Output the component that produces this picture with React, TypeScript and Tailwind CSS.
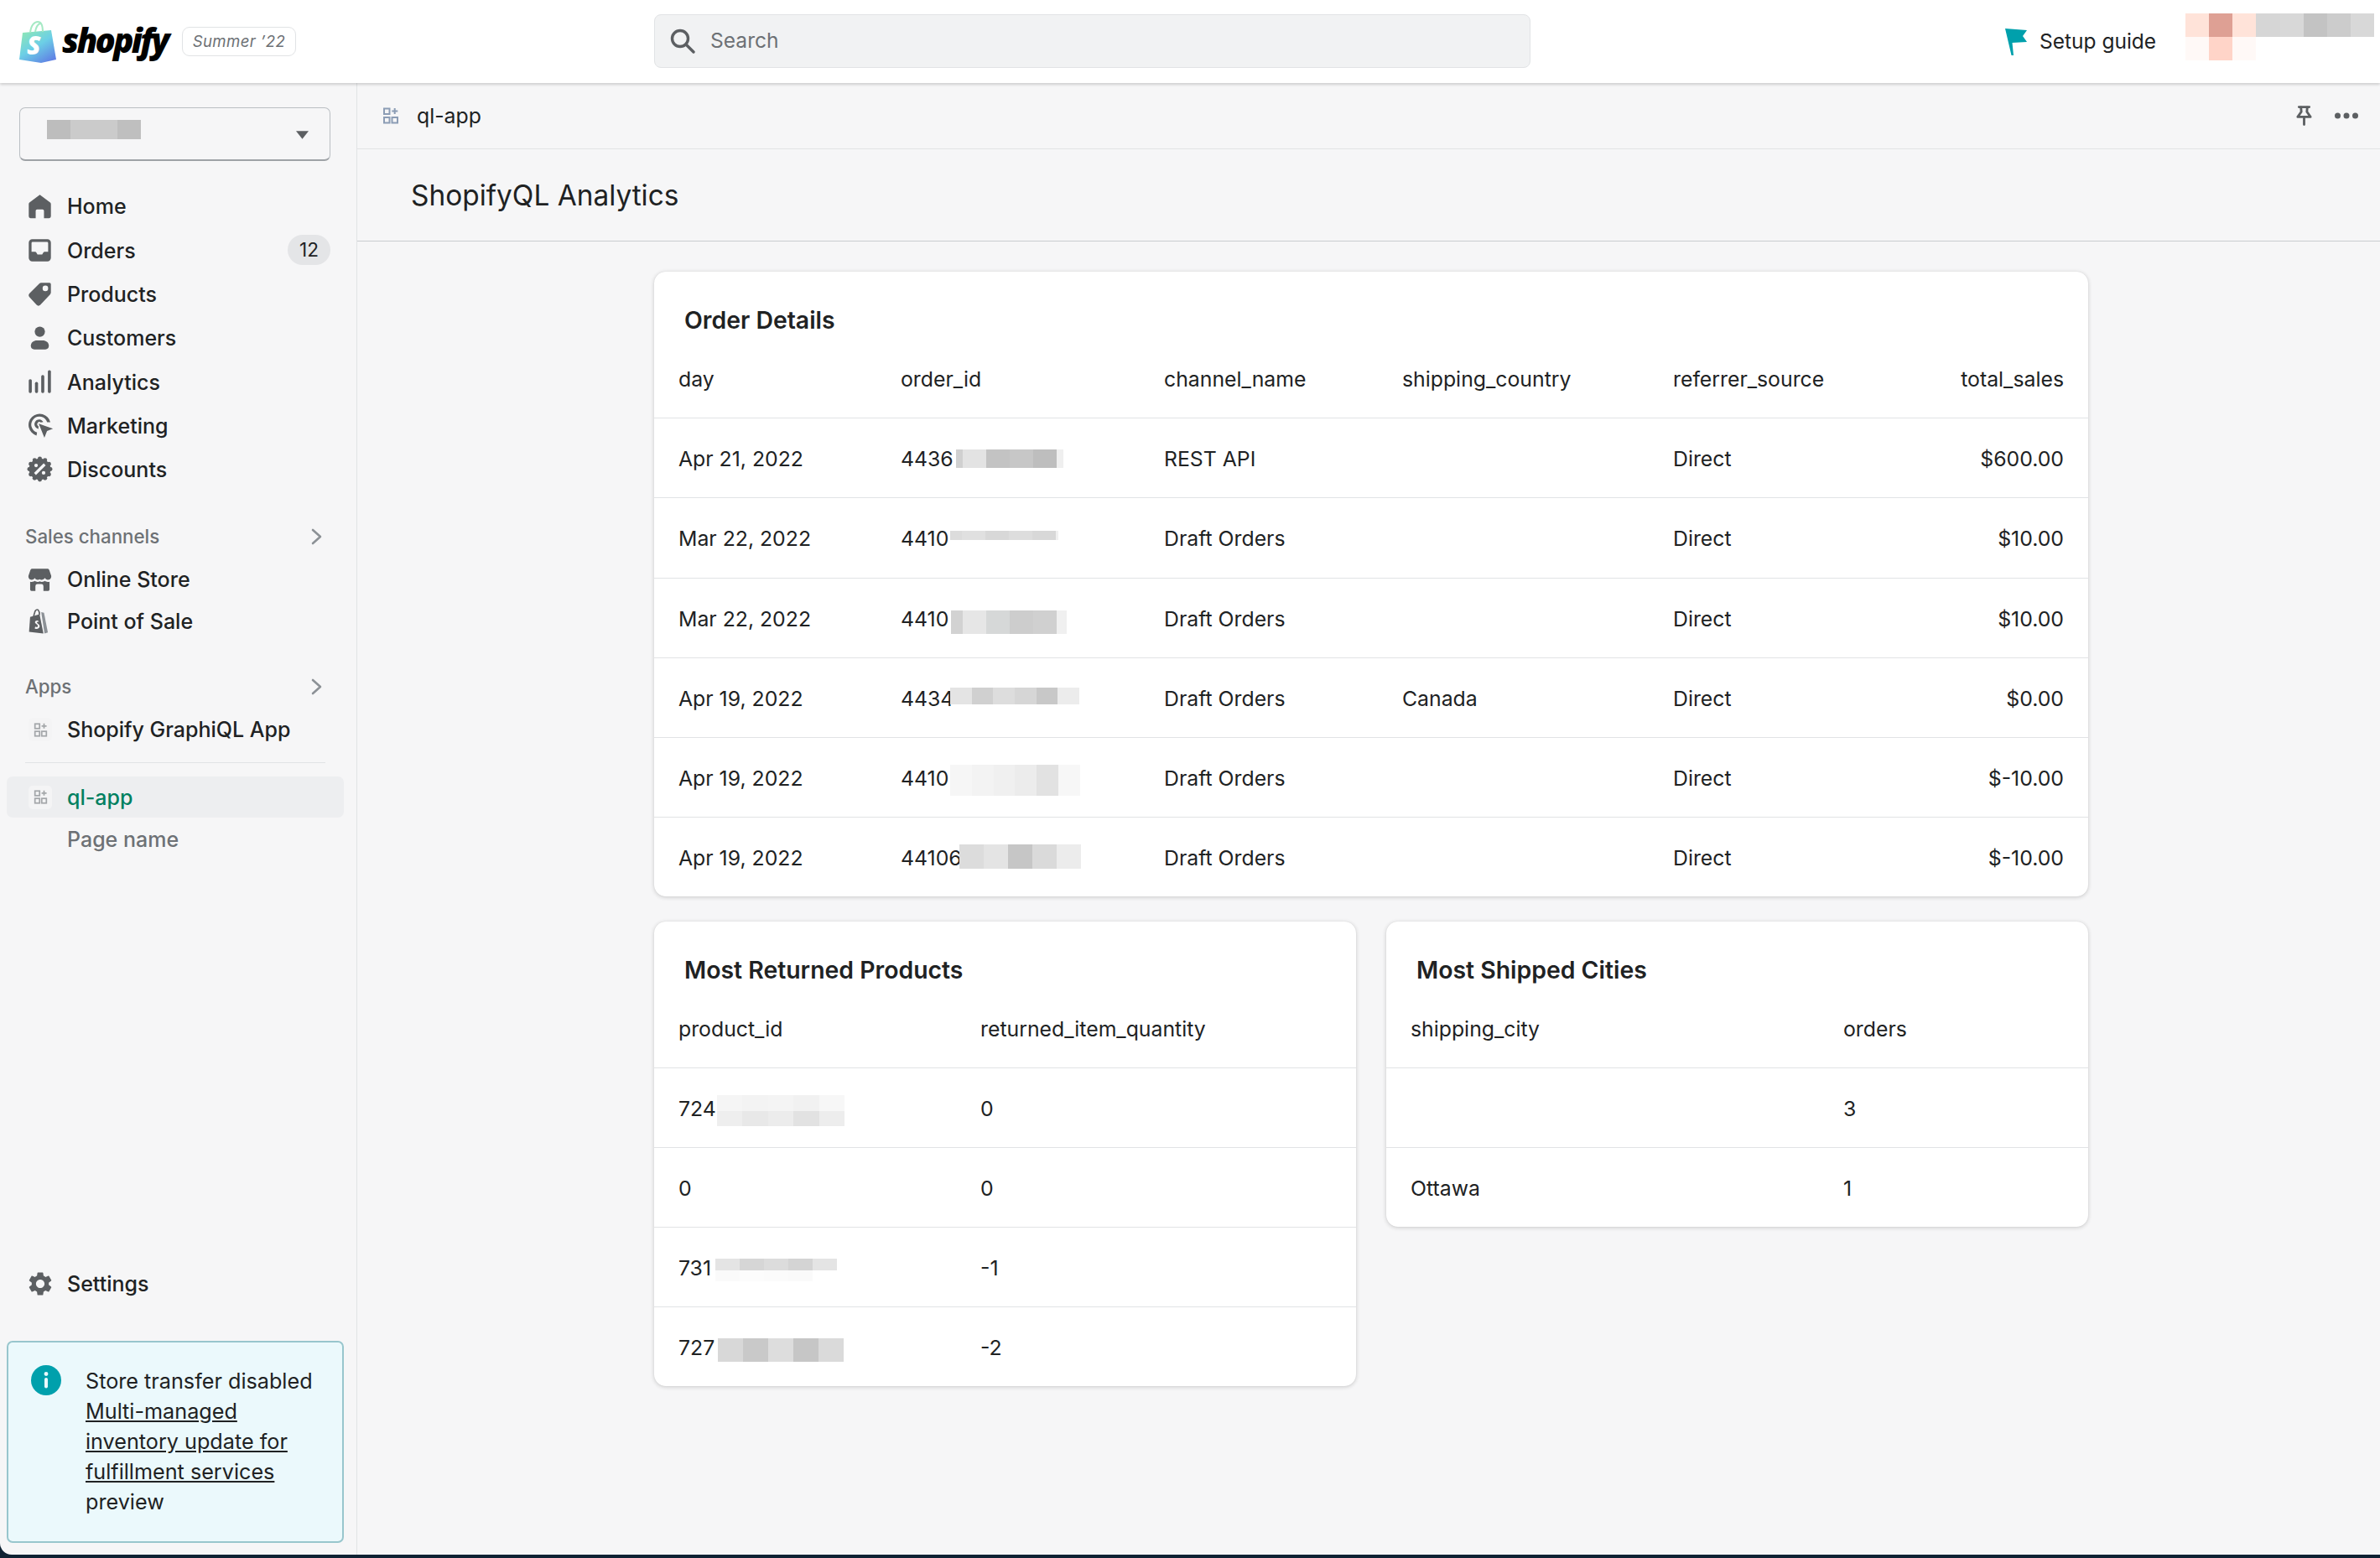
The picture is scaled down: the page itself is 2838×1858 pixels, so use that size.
import type { ReactNode } from "react";
import { MdSettings } from "react-icons/md";

// blurred-out blocks that sit on top of ids in the screenshot
function Mosaic({ box, rows }: { box: string; rows: string[][] }) {
  return (
    <span className={`absolute flex flex-col ${box}`}>
      {rows.map((cells, i) => (
        <span key={i} className="flex flex-1">
          {cells.map((c, j) => (
            <span key={j} className={c} />
          ))}
        </span>
      ))}
    </span>
  );
}

function Ico({ children, className = "" }: { children: ReactNode; className?: string }) {
  return (
    <svg viewBox="0 0 20 20" className={`w-[33px] h-[33px] -ml-[1px] shrink-0 fill-[#5c5f62] ${className}`}>
      {children}
    </svg>
  );
}

const HomeIcon = () => (
  <Ico>
    <path d="M18 8v9a1.3 1.3 0 0 1-1.3 1.3H13V13a1 1 0 0 0-1-1H8a1 1 0 0 0-1 1v5.3H3.3A1.3 1.3 0 0 1 2 17V8c0-.4.2-.8.5-1L10 1.3 17.5 7c.3.2.5.6.5 1z" />
  </Ico>
);
const OrdersIcon = () => (
  <Ico>
    <path
      fillRule="evenodd"
      d="M4.5 2h11A2.5 2.5 0 0 1 18 4.5v11a2.5 2.5 0 0 1-2.5 2.5h-11A2.5 2.5 0 0 1 2 15.500v-11A2.500 2.500 0 0 1 4.500 2zM4.800 4a.8.8 0 0 0-.8.8V11h2.500c.500 0 .800.200 1 .600L8.300 13h3.400l.800-1.400c.200-.400.500-.600 1-.600H16V4.800a.8.8 0 0 0-.8-.8z"
    />
  </Ico>
);
const TagIcon = () => (
  <Ico>
    <path
      fillRule="evenodd"
      d="M17 2h-6a2 2 0 0 0-1.400.600l-7 7a2 2 0 0 0 0 2.800l5 5.500a2 2 0 0 0 2.800 0l7-7.500A2 2 0 0 0 18 9V3a1 1 0 0 0-1-1zm-3 6a2 2 0 1 1 0-4 2 2 0 0 1 0 4z"
    />
  </Ico>
);
const PersonIcon = () => (
  <Ico>
    <circle cx="10" cy="5.200" r="3.700" />
    <path d="M3.500 15.500c0-2.700 2-4 4.500-4h4c2.500 0 4.500 1.300 4.500 4 0 1.700-1 2.500-2.500 2.500H6c-1.500 0-2.500-.8-2.500-2.500z" />
  </Ico>
);
const BarsIcon = () => (
  <Ico>
    <rect x="2" y="8" width="2.200" height="10" rx="1" />
    <rect x="6.500" y="10" width="2.200" height="8" rx="1" />
    <rect x="11" y="5" width="2.200" height="13" rx="1" />
    <rect x="15.800" y="1.500" width="2.200" height="16.500" rx="1" />
  </Ico>
);
const TargetIcon = () => (
  <Ico>
    <path d="M7.600 17.200A8 8 0 1 1 17.600 7.600l-2.300-.1A5.900 5.900 0 1 0 8 15z" />
    <path d="M9 12.400a3.400 3.400 0 1 1 3.500-5l-1.800.3a1.600 1.600 0 1 0-1.700 2.700z" />
    <path d="M9.200 8.600 19.500 12.300 15.200 14 13.300 18.800z" />
  </Ico>
);
const DiscountIcon = () => (
  <Ico>
    {[0, 30, 60, 90, 120, 150, 180, 210, 240, 270, 300, 330].map((a) => (
      <circle
        key={a}
        cx={10 + 7.6 * Math.cos((a * Math.PI) / 180)}
        cy={10 + 7.6 * Math.sin((a * Math.PI) / 180)}
        r="1.500"
      />
    ))}
    <circle cx="10" cy="10" r="7.800" />
    <path d="M12.800 5.800 14.200 7.200 7.200 14.200 5.800 12.800z" className="fill-[#f6f6f7]" />
    <circle cx="7.300" cy="7.300" r="1.300" className="fill-[#f6f6f7]" />
    <circle cx="12.700" cy="12.700" r="1.300" className="fill-[#f6f6f7]" />
  </Ico>
);
const StoreIcon = () => (
  <Ico>
    <path d="M4.500 2h11c.6 0 1.100.4 1.300.9L18.200 7c.3 1.700-.8 3-2.300 3-1.100 0-1.800-.6-2.300-1.300-.5.800-1.300 1.300-2.300 1.300-.6 0-1.100-.2-1.300-.5-.4.300-.9.500-1.600.5-.9 0-1.700-.5-2.100-1.300C6 9.400 5.200 10 4.100 10c-1.500 0-2.600-1.300-2.300-3l1.400-4.100c.2-.5.700-.9 1.300-.9z" />
    <path d="M3 11.300c.4.100.8.200 1.200.2.900 0 1.600-.3 2.200-.7.500.4 1.200.7 2 .7.600 0 1.200-.1 1.600-.4.400.3 1 .4 1.500.4.800 0 1.600-.3 2.100-.7.600.4 1.300.7 2.200.7.400 0 .8-.1 1.200-.2V17a1 1 0 0 1-1 1h-3.400v-3.500a1.500 1.500 0 0 0-1.500-1.500H8.300a1.500 1.500 0 0 0-1.500 1.500V18H4a1 1 0 0 1-1-1z" />
  </Ico>
);
const PosIcon = () => (
  <svg viewBox="0 0 20 20" className="w-[33px] h-[33px] -ml-[1px] shrink-0">
    <path d="M3 6.500 9.800 4.500 12.600 18.500 2.200 17.200z" className="fill-[#5c5f62]" />
    <path d="M5.500 6 6.300 3.200C6.700 1.500 8 .8 8.800 1.500 9.500 2.200 9.800 3.500 9.700 5" fill="none" stroke="#5c5f62" strokeWidth="1" />
    <path d="M13 3.500 15.800 17.700 13.400 18.500 11 3z" className="fill-[#8c9196]" />
    <path d="M8.800 9.200C7.600 8.800 6.600 9.300 6.500 10.300c0 1.300 2.100 1.500 2.100 2.800 0 .8-.9 1-1.900.4l-.4 1.300c1.600.7 3.400.2 3.600-1.400.2-1.600-2-2-2-2.900 0-.4.500-.6 1.400-.3z" className="fill-[#f6f6f7]" />
  </svg>
);

// the small "app" glyph: three squares and a plus
function AppGlyph({ tone }: { tone: string }) {
  return (
    <svg viewBox="0 0 20 20" className={`fill-none ${tone}`} strokeWidth="2">
      <rect x="2" y="1.500" width="6.500" height="6.500" />
      <rect x="2" y="12" width="6.500" height="6.500" />
      <rect x="11.500" y="12" width="6.500" height="6.500" />
      <path d="M14.700 1v7M11.300 4.500h7" />
    </svg>
  );
}

function AppBox() {
  return (
    <span className="flex items-center justify-center w-[28px] h-[28px] ml-[2px] rounded-[5px] bg-[#f4f4f5]">
      <AppGlyph tone="stroke-[#a3a6a9] w-[17px] h-[17px]" />
    </span>
  );
}

function Chevron() {
  return (
    <svg viewBox="0 0 14 20" className="w-[14px] h-[20px] fill-none stroke-[#8c9196]" strokeWidth="2.600" strokeLinecap="round" strokeLinejoin="round">
      <path d="M2 2l9 8-9 8" />
    </svg>
  );
}

function NavItem({ icon, label, badge, rowH }: { icon: ReactNode; label: string; badge?: string; rowH: string }) {
  return (
    <div className={`flex items-center pl-[32px] pr-[31px] ${rowH}`}>
      <span className="w-[48px]">{icon}</span>
      <span className="font-medium text-[25px] pt-[2px]">{label}</span>
      {badge && (
        <span className="ml-auto flex items-center justify-center w-[51px] h-[36px] rounded-full bg-[#e4e5e7] text-[22.6px]">
          {badge}
        </span>
      )}
    </div>
  );
}

function SectionHead({ label, mt }: { label: string; mt: string }) {
  return (
    <div className={`flex items-center justify-between h-[40px] pl-[30px] pr-[40px] ${mt}`}>
      <span className="text-[22.3px] font-medium text-[#6d7175]">{label}</span>
      <Chevron />
    </div>
  );
}

function Sidebar() {
  return (
    <aside className="w-[426px] shrink-0 border-r border-[#e1e3e5] flex flex-col">
      <div className="relative mt-[29px] mx-[23px] w-[371px] h-[64px] rounded-[7px] border border-[#babfc3] border-b-2 border-b-[#9ea2a6]">
        <Mosaic
          box="left-[32px] top-[14px] w-[112px] h-[23px]"
          rows={[["flex-1 bg-[#bdbdbd]", "flex-[2] bg-[#cbcbcb]", "flex-1 bg-[#bfbfbf]"]]}
        />
        <svg viewBox="0 0 16 10" className="absolute left-[329px] top-[27px] w-[15px] h-[10px] fill-[#5c5f62]">
          <path d="M0 0h16L8 10z" />
        </svg>
      </div>

      <nav className="mt-[28px]">
        <NavItem rowH="h-[52.300px]" icon={<HomeIcon />} label="Home" />
        <NavItem rowH="h-[52.300px]" icon={<OrdersIcon />} label="Orders" badge="12" />
        <NavItem rowH="h-[52.300px]" icon={<TagIcon />} label="Products" />
        <NavItem rowH="h-[52.300px]" icon={<PersonIcon />} label="Customers" />
        <NavItem rowH="h-[52.300px]" icon={<BarsIcon />} label="Analytics" />
        <NavItem rowH="h-[52.300px]" icon={<TargetIcon />} label="Marketing" />
        <NavItem rowH="h-[52.300px]" icon={<DiscountIcon />} label="Discounts" />
      </nav>

      <SectionHead label="Sales channels" mt="mt-[34px]" />
      <div className="mt-[6px]">
        <NavItem rowH="h-[50px]" icon={<StoreIcon />} label="Online Store" />
        <NavItem rowH="h-[50px]" icon={<PosIcon />} label="Point of Sale" />
      </div>

      <SectionHead label="Apps" mt="mt-[33px]" />
      <div className="mt-[6px]">
        <NavItem rowH="h-[50px]" icon={<AppBox />} label="Shopify GraphiQL App" />
      </div>
      <div className="mt-[14px] mx-[30px] w-[358px] h-px bg-[#e1e3e5]" />

      <div className="mt-[16px] mx-[8px] w-[402px] h-[49px] flex items-center pl-[24px] rounded-[7px] bg-[#edeef0]">
        <span className="w-[48px]">
          <AppBox />
        </span>
        <span className="font-medium text-[25px] pt-[2px] text-[#008060]">ql-app</span>
      </div>
      <div className="h-[54px] flex items-center pl-[80px] font-medium text-[25px] text-[#6d7175]">Page name</div>

      <div className="mt-auto">
        <NavItem
          rowH="h-[52px]"
          icon={<MdSettings className="w-[34px] h-[34px] -ml-[1px] fill-[#5c5f62]" />}
          label="Settings"
        />
      </div>

      <div className="mt-[42px] mb-[14px] mx-[8px] w-[402px] h-[241px] flex rounded-[7px] border-2 border-[#98c6cd] bg-[#ebf9fc] pl-[27px] pt-[27px]">
        <svg viewBox="0 0 36 36" className="w-[36px] h-[36px] shrink-0 mr-[29px]">
          <circle cx="18" cy="18" r="18" fill="#00a0ac" />
          <circle cx="18" cy="10.500" r="2.400" fill="#ebf9fc" />
          <rect x="16" y="15" width="4" height="12.500" rx="2" fill="#ebf9fc" />
        </svg>
        <p className="text-[25.200px] leading-[36px] mt-[1px]">
          Store transfer disabled
          <br />
          <a className="underline">
            Multi-managed
            <br />
            inventory update for
            <br />
            fulfillment services
          </a>
          <br />
          preview
        </p>
      </div>
    </aside>
  );
}

type Cell = { text?: string; mosaic?: ReactNode; right?: boolean };

function Row({ cells, cols, rowH, line }: { cells: Cell[]; cols: string; rowH: string; line: boolean }) {
  return (
    <div className={`grid items-center px-[29px] ${cols} ${rowH} ${line ? "border-t border-[#e1e3e5]" : ""}`}>
      {cells.map((c, i) => (
        <div key={i} className={`pt-[3px] ${c.right ? "text-right" : ""} ${c.mosaic ? "relative self-stretch flex items-center" : ""}`}>
          {c.text}
          {c.mosaic}
        </div>
      ))}
    </div>
  );
}

function DataCard({
  title,
  cols,
  head,
  rows,
  rowH,
  outer = "",
}: {
  title: string;
  cols: string;
  head: Cell[];
  rows: Cell[][];
  rowH: string;
  outer?: string;
}) {
  return (
    <section className={`bg-white rounded-[14px] overflow-hidden shadow-[0_1px_5px_rgba(23,24,24,0.2),0_0_1px_rgba(23,24,24,0.1)] ${outer}`}>
      <h2 className="pt-[36px] h-[79px] pl-[36px] text-[28.400px] leading-[44px] font-semibold">{title}</h2>
      <Row cells={head} cols={cols} rowH={rowH} line={false} />
      {rows.map((r, i) => (
        <Row key={i} cells={r} cols={cols} rowH={rowH} line />
      ))}
    </section>
  );
}

const orderCols = "grid-cols-[265px_314px_284px_323px_1fr_240px]";

function orderRow(day: string, id: string, mosaic: ReactNode, channel: string, country: string, total: string): Cell[] {
  return [
    { text: day },
    { text: id, mosaic },
    { text: channel },
    { text: country },
    { text: "Direct" },
    { text: total, right: true },
  ];
}

const orderRows: Cell[][] = [
  orderRow(
    "Apr 21, 2022",
    "4436",
    <Mosaic
      box="left-[66px] top-[37px] w-[128px] h-[22px]"
      rows={[["w-[8px] bg-[#d0d0d0]", "flex-1 bg-[#e3e3e3]", "flex-1 bg-[#c3c3c3]", "flex-1 bg-[#c7c7c7]", "flex-1 bg-[#bebebe]", "w-[8px] bg-[#efefef]"]]}
    />,
    "REST API",
    "",
    "$600.00",
  ),
  orderRow(
    "Mar 22, 2022",
    "4410",
    <Mosaic
      box="left-[59px] top-[39px] w-[129px] h-[11px]"
      rows={[["w-[14px] bg-[#dcdcdc]", "flex-1 bg-[#e0e0e0]", "flex-1 bg-[#d8d8d8]", "flex-1 bg-[#dddddd]", "flex-1 bg-[#d8d8d8]", "w-[3px] bg-[#f0f0f0]"]]}
    />,
    "Draft Orders",
    "",
    "$10.00",
  ),
  orderRow(
    "Mar 22, 2022",
    "4410",
    <Mosaic
      box="left-[60px] top-[38px] w-[138px] h-[28px]"
      rows={[["w-[14px] bg-[#d2d2d2]", "flex-1 bg-[#e6e6e6]", "flex-1 bg-[#d6d8d8]", "flex-1 bg-[#cdcdcd]", "flex-1 bg-[#d0d0d0]", "w-[12px] bg-[#f0f0f0]"]]}
    />,
    "Draft Orders",
    "",
    "$10.00",
  ),
  orderRow(
    "Apr 19, 2022",
    "4434",
    <Mosaic
      box="left-[59px] top-[35px] w-[154px] h-[20px]"
      rows={[["flex-1 bg-[#e4e4e4]", "flex-1 bg-[#d0d0d0]", "flex-1 bg-[#dddddd]", "flex-1 bg-[#d6d6d6]", "flex-1 bg-[#c8c8c8]", "flex-1 bg-[#ececec]"]]}
    />,
    "Draft Orders",
    "Canada",
    "$0.00",
  ),
  orderRow(
    "Apr 19, 2022",
    "4410",
    <Mosaic
      box="left-[59px] top-[32px] w-[155px] h-[37px]"
      rows={[["flex-1 bg-[#f6f6f6]", "flex-1 bg-[#f3f3f3]", "flex-1 bg-[#f0f0f0]", "flex-1 bg-[#ececec]", "flex-1 bg-[#e2e2e2]", "flex-1 bg-[#f7f7f7]"]]}
    />,
    "Draft Orders",
    "",
    "$-10.00",
  ),
  orderRow(
    "Apr 19, 2022",
    "44106",
    <Mosaic
      box="left-[70px] top-[32px] w-[145px] h-[29px]"
      rows={[["flex-1 bg-[#dcdcdc]", "flex-1 bg-[#e4e4e4]", "flex-1 bg-[#c6c6c6]", "flex-1 bg-[#dadada]", "flex-1 bg-[#ececec]"]]}
    />,
    "Draft Orders",
    "",
    "$-10.00",
  ),
];

const productRows: Cell[][] = [
  [
    {
      text: "724",
      mosaic: (
        <Mosaic
          box="left-[46px] top-[32px] w-[152px] h-[37px]"
          rows={[
            ["flex-1 bg-[#f5f5f5]", "flex-1 bg-[#f3f3f3]", "flex-1 bg-[#f4f4f4]", "flex-1 bg-[#f1f1f1]", "flex-1 bg-[#f7f7f7]"],
            ["flex-1 bg-[#eeeeee]", "flex-1 bg-[#e8e8e8]", "flex-1 bg-[#ececec]", "flex-1 bg-[#e2e2e2]", "flex-1 bg-[#ededed]"],
          ]}
        />
      ),
    },
    { text: "0" },
  ],
  [{ text: "0" }, { text: "0" }],
  [
    {
      text: "731",
      mosaic: (
        <Mosaic
          box="left-[44px] top-[37px] w-[145px] h-[27px]"
          rows={[
            ["flex-1 bg-[#e4e4e4]", "flex-1 bg-[#d6d6d6]", "flex-1 bg-[#dcdcdc]", "flex-1 bg-[#d4d4d4]", "flex-1 bg-[#e4e4e4]"],
            ["flex-1 bg-[#fafafa]", "flex-1 bg-[#fcfcfc]", "flex-1 bg-[#fbfbfb]", "flex-1 bg-[#fafafa]", "flex-1 bg-white"],
          ]}
        />
      ),
    },
    { text: "-1" },
  ],
  [
    {
      text: "727",
      mosaic: (
        <Mosaic
          box="left-[47px] top-[37px] w-[150px] h-[28px]"
          rows={[["flex-1 bg-[#d8d8d8]", "flex-1 bg-[#c9c9c9]", "flex-1 bg-[#dddddd]", "flex-1 bg-[#c6c6c6]", "flex-1 bg-[#dadada]"]]}
        />
      ),
    },
    { text: "-2" },
  ],
];

function Main() {
  return (
    <main className="flex-1 min-w-0">
      <div className="h-[79px] flex items-center pl-[30px] pr-[26px] border-b border-[#e1e3e5]">
        <AppGlyph tone="stroke-[#8c9db5] w-[20px] h-[20px]" />
        <span className="ml-[21px] pt-[1px]">ql-app</span>
        <svg viewBox="0 0 20 26" className="ml-auto w-[19px] h-[26px] fill-none stroke-[#5c5f62]" strokeWidth="3" strokeLinecap="round" strokeLinejoin="round">
          <path d="M3.500 2h13M6 2l.5 6L2 14.500h16L13.500 8 14 2M10 15v9" />
        </svg>
        <svg viewBox="0 0 28 8" className="ml-[27px] w-[28px] h-[8px] fill-[#5c5f62]">
          <circle cx="3.500" cy="4" r="3.500" />
          <circle cx="14" cy="4" r="3.500" />
          <circle cx="24.500" cy="4" r="3.500" />
        </svg>
      </div>
      <div className="h-[110px] flex items-center pl-[64px] pt-[2px] border-b border-[#c9cccf] text-[33.400px]">ShopifyQL Analytics</div>
      <div className="ml-[354px] w-[1710px] pt-[36px] flex flex-col gap-[30px]">
        <DataCard
          title="Order Details"
          cols={orderCols}
          rowH="h-[95.200px]"
          head={[
            { text: "day" },
            { text: "order_id" },
            { text: "channel_name" },
            { text: "shipping_country" },
            { text: "referrer_source" },
            { text: "total_sales", right: true },
          ]}
          rows={orderRows}
        />
        <div className="flex items-start gap-[36px]">
          <DataCard
            title="Most Returned Products"
            cols="grid-cols-[360px_1fr]"
            rowH="h-[95px]"
            outer="w-[837px]"
            head={[{ text: "product_id" }, { text: "returned_item_quantity" }]}
            rows={productRows}
          />
          <DataCard
            title="Most Shipped Cities"
            cols="grid-cols-[516px_1fr]"
            rowH="h-[95px]"
            outer="w-[837px]"
            head={[{ text: "shipping_city" }, { text: "orders" }]}
            rows={[
              [{ text: "" }, { text: "3" }],
              [{ text: "Ottawa" }, { text: "1" }],
            ]}
          />
        </div>
      </div>
    </main>
  );
}

function TopBar() {
  return (
    <header className="relative z-10 h-[99px] shrink-0 bg-white flex items-center shadow-[0_2px_3px_rgba(0,0,0,0.16)]">
      <div className="w-[780px] shrink-0 flex items-center">
        <svg viewBox="0 0 44 50" className="ml-[23px] w-[44px] h-[50px] shrink-0">
          <defs>
            <linearGradient id="bag" x1="0.100" y1="0" x2="0.800" y2="1">
              <stop offset="0" stopColor="#8fe8b4" />
              <stop offset="0.500" stopColor="#6ccfe6" />
              <stop offset="1" stopColor="#5f7fe4" />
            </linearGradient>
          </defs>
          <path d="M4 14 38 11 44 46 26 50 0 46z" fill="url(#bag)" />
          <path d="M13 14C14 5 18 1 22 1c4 0 6 4 6 12M19 13c1-6 3-9 6-10" fill="none" stroke="#a5e9c4" strokeWidth="2" />
          <text x="9" y="40" fontFamily="Open Sans" fontStyle="italic" fontWeight="800" fontSize="30" fill="#fff">
            S
          </text>
        </svg>
        <span className="ml-[7px] w-[129px] font-['Open_Sans',sans-serif] italic font-extrabold text-[40px] leading-none tracking-[-2.700px] text-black -mt-[4px]">
          shopify
        </span>
        <span className="ml-[14px] w-[136px] h-[35px] flex items-center justify-center rounded-[9px] border border-[#e1e3e5] italic text-[18.600px] tracking-[0.4px] text-[#6d7175]">
          Summer ’22
        </span>
      </div>

      <div className="w-[1045px] h-[64px] -mt-[2px] shrink-0 flex items-center rounded-[8px] border border-[#e1e3e5] bg-[#f1f2f3] pl-[18px]">
        <svg viewBox="0 0 30 30" className="w-[30px] h-[30px] fill-none stroke-[#5c5f62]" strokeWidth="3.400" strokeLinecap="round">
          <circle cx="12" cy="12" r="9.500" />
          <path d="M19 19l9 9" />
        </svg>
        <span className="ml-[18px] text-[24.600px] text-[#6d7175]">Search</span>
      </div>

      <svg viewBox="0 0 26 32" className="ml-[566px] w-[26px] h-[32px] fill-[#00a0ac] shrink-0">
        <path d="M0 0 26 2 21 9 26 16 8.500 17 10 32 7.500 32z" />
      </svg>
      <span className="ml-[15px] w-[174px] shrink-0 whitespace-nowrap text-[24.500px]">Setup guide</span>
      <span className="relative w-[232px] h-[60px] shrink-0">
        <Mosaic
          box="left-0 top-[-4px] w-[225px] h-[56px]"
          rows={[
            ["flex-1 bg-[#ffe3d9]", "flex-1 bg-[#dea094]", "flex-1 bg-[#ffe3d9]", "flex-1 bg-[#d6d6d6]", "flex-1 bg-[#d8d8d8]", "flex-1 bg-[#c3c3c3]", "flex-1 bg-[#cccccc]", "flex-1 bg-[#d8d8d8]"],
            ["flex-1 bg-[#fff9f7]", "flex-1 bg-[#ffd4c8]", "flex-1 bg-[#fff9f7]", "flex-[5]"],
          ]}
        />
      </span>
    </header>
  );
}

export default function App() {
  return (
    <div className="w-[2838px] h-[1858px] bg-[#0f2233] overflow-hidden font-['Inter',sans-serif] text-[24.800px] text-[#202223]">
      <div className="h-[1854px] flex flex-col bg-[#f6f6f7] rounded-bl-[14px] overflow-hidden">
        <TopBar />
        <div className="flex flex-1 min-h-0">
          <Sidebar />
          <Main />
        </div>
      </div>
    </div>
  );
}
